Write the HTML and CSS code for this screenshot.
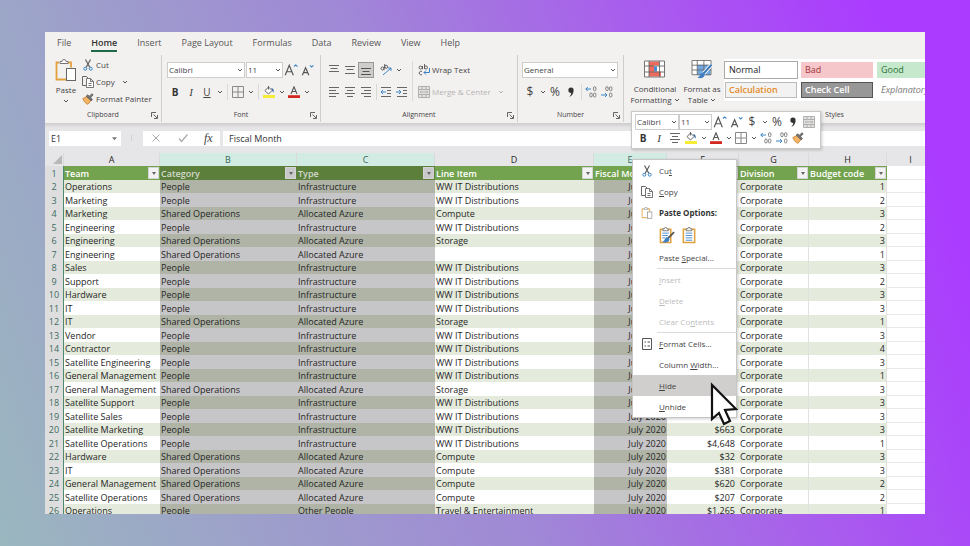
FILE: index.html
```html
<!DOCTYPE html>
<html lang="en">
<head>
<meta charset="utf-8">
<meta name="viewport" content="width=device-width, initial-scale=1">
<title>Budget workbook</title>
<link rel="stylesheet" href="styles.css">
</head>
<body>
<svg class="sprite" aria-hidden="true">
  <symbol id="chev" viewBox="0 0 6 6"><path d="M1 2l2 2 2-2" fill="none" stroke="#555" stroke-width="1"/></symbol>
  <symbol id="cut" viewBox="0 0 10 12"><path d="M2.500 .5l4.400 8M7.500 .5L3.100 8.500" fill="none" stroke="#555" stroke-width="1.100"/><circle cx="2.300" cy="9.700" r="1.500" fill="none" stroke="#3b84c4"/><circle cx="7.700" cy="9.700" r="1.500" fill="none" stroke="#3b84c4"/></symbol>
  <symbol id="copy" viewBox="0 0 12 12"><path d="M4 9.500H.5V.5h4l1.500 1.500" fill="none" stroke="#666"/><path d="M4.500 2.500h4l3 3v6h-7zM8.500 2.500v3h3M6.500 7.500h3M6.500 9.500h3" fill="#fff" stroke="#666" stroke-width=".9"/></symbol>
  <symbol id="painter" viewBox="0 0 12 12"><path d="M.8 5.500L5 3.500l4 4L6 11.300C3.800 10.800 1.800 8.500 .8 5.500z" fill="#f3b466" stroke="#c47f2c" stroke-width=".8"/><path d="M4.200 3l5 5 1.200-1.500L8.700 4.500l2.500-2.700L10 .7 7.300 3.200 5.800 1.800z" fill="#777" stroke="#444" stroke-width=".6"/></symbol>
  <symbol id="paste" viewBox="0 0 22 23"><path d="M4 3.500H1.500v17h10M13 3.500h3v5" fill="none" stroke="#e3a13c" stroke-width="1.800"/><path d="M5 4.500V2.500h2a2 2 0 0 1 4 0h2v2z" fill="#fff" stroke="#777"/><rect x="11.500" y="9.500" width="9" height="12" fill="#fff" stroke="#666"/></symbol>
  <symbol id="borders" viewBox="0 0 12 12"><path d="M.5 .5h11v11H.5zM6 .5v11M.5 6h11" fill="none" stroke="#888"/></symbol>
  <symbol id="fill" viewBox="0 0 12 12"><path d="M5.500 1L2 4.700 5.500 8 9 4.500zM5.500 0v3.500" fill="#fff" stroke="#555" stroke-width=".9"/><path d="M8 2.200c2.500 0 3.200 2 2.500 4.300-.8-.6-1-2-2.500-4.300z" fill="#2d5fa5"/><path d="M0 9h12v3H0z" fill="#f6ec35"/></symbol>
  <symbol id="fcolor" viewBox="0 0 12 12"><path d="M3 8L6 .8 9 8M4 5.500h4" fill="none" stroke="#555" stroke-width="1.100"/><path d="M0 9.200h12V12H0z" fill="#d2281f"/></symbol>
  <symbol id="grow" viewBox="0 0 12 12"><path d="M1 10.500L4.500 2l3.500 8.500M2.300 7.500h4.400" fill="none" stroke="#555"/><path d="M8.500 3L10 1.600 11.500 3" fill="none" stroke="#3b84c4" stroke-width=".9"/></symbol>
  <symbol id="shrink" viewBox="0 0 12 12"><path d="M2 10.500L4.800 4l2.800 6.500M3 8.300h3.600" fill="none" stroke="#555"/><path d="M8.500 2L10 3.400 11.500 2" fill="none" stroke="#3b84c4" stroke-width=".9"/></symbol>
  <symbol id="top" viewBox="0 0 12 12"><path d="M1 1.500h10M2.500 4.500h7M1 7.500h10" stroke="#666"/></symbol>
  <symbol id="mid" viewBox="0 0 12 12"><path d="M1 2.500h10M2.500 5.500h7M1 9.500h10" stroke="#666"/></symbol>
  <symbol id="bot" viewBox="0 0 12 12"><path d="M1 4.500h10M2.500 7.500h7M1 10.500h10" stroke="#555"/></symbol>
  <symbol id="left" viewBox="0 0 12 12"><path d="M1 1.500h10M1 4.500h7M1 7.500h10M1 10.500h7" stroke="#666"/></symbol>
  <symbol id="center" viewBox="0 0 12 12"><path d="M1 1.500h10M3 4.500h6M1 7.500h10M3 10.500h6" stroke="#666"/></symbol>
  <symbol id="right" viewBox="0 0 12 12"><path d="M1 1.500h10M4 4.500h7M1 7.500h10M4 10.500h7" stroke="#666"/></symbol>
  <symbol id="outdent" viewBox="0 0 12 12"><path d="M1 1.500h10M7 4.500h4M7 7.500h4M1 10.500h10" stroke="#666"/><path d="M6 6H1M3 4L1 6l2 2" fill="none" stroke="#3b84c4"/></symbol>
  <symbol id="indent" viewBox="0 0 12 12"><path d="M1 1.500h10M7 4.500h4M7 7.500h4M1 10.500h10" stroke="#666"/><path d="M0 6h5M3 4l2 2-2 2" fill="none" stroke="#3b84c4"/></symbol>
  <symbol id="orient" viewBox="0 0 12 12"><g fill="none" stroke="#555" stroke-width=".9"><circle cx="2.500" cy="4.500" r="1.500"/><path d="M4 3v3.200"/><circle cx="6.200" cy="2.800" r="1.500"/><path d="M4.700 0v4"/></g><path d="M3 11l8-7M8 4h3v3" fill="none" stroke="#3b84c4"/></symbol>
  <symbol id="wrap" viewBox="0 0 12 12"><g fill="none" stroke="#555" stroke-width=".9"><circle cx="2.500" cy="3.500" r="1.500"/><path d="M4.500 2v3.200M6.500 0v5"/><circle cx="8" cy="3.500" r="1.500"/><path d="M4 7.500a1.800 1.800 0 1 0 0 3"/></g><path d="M11.500 4v4.500H6M8 6.500l-2 2 2 2" fill="none" stroke="#3b84c4"/></symbol>
  <symbol id="merge" viewBox="0 0 12 12"><path d="M.5 .5h11v11H.5zM.5 3.500h11M.5 8.500h11M4 .5v3M8 .5v3M4 8.500v3M8 8.500v3M2 6h8M3.500 4.800L2.300 6l1.200 1.200M8.500 4.800L9.700 6 8.500 7.200" fill="#e4e2e1" stroke="#aaa" stroke-width=".9"/></symbol>
  <symbol id="incdec" viewBox="0 0 12 12"><path d="M6 3H.8M2.800 1l-2 2 2 2" fill="none" stroke="#3b84c4"/><g fill="none" stroke="#777" stroke-width=".9"><rect x="8.500" y=".7" width="2.400" height="4" rx="1.200"/><rect x="4.800" y="7" width="2.400" height="4" rx="1.200"/><rect x="8.500" y="7" width="2.400" height="4" rx="1.200"/></g></symbol>
  <symbol id="decdec" viewBox="0 0 12 12"><path d="M0 9h6M4 7l2 2-2 2" fill="none" stroke="#3b84c4"/><g fill="none" stroke="#777" stroke-width=".9"><rect x="4.800" y=".7" width="2.400" height="4" rx="1.200"/><rect x="8.500" y=".7" width="2.400" height="4" rx="1.200"/><rect x="8.500" y="7" width="2.400" height="4" rx="1.200"/></g></symbol>
  <symbol id="comma" viewBox="0 0 12 12"><path d="M6 1.500a2.600 2.600 0 0 1 2.600 2.700C8.600 7.500 7 9.800 4.200 11c1.300-1.300 2-2.600 2-4A2.600 2.600 0 1 1 6 1.500z" fill="#333"/></symbol>
  <symbol id="launch" viewBox="0 0 7 7"><path d="M.5 5V.5H5M2.500 2.500L6 6M6.500 3v3.500H3" fill="none" stroke="#555" stroke-width=".9"/></symbol>
  <symbol id="cond" viewBox="0 0 22 18"><path d="M.5 .5h20v16H.5z" fill="#fff"/><path d="M5 1h10v4H5zM5 5h5v6H5zM5 11h12v5H5z" fill="#ee6a5c"/><path d="M10 6h3v5h-3z" fill="#4a8ad0"/><path d="M.5 .5h20v16H.5zM.5 5.500h20M.5 11.500h20M5 .5v16M15.500 .5v16" fill="none" stroke="#666" stroke-width=".9"/></symbol>
  <symbol id="ftable" viewBox="0 0 22 20"><path d="M.5 .5h20v15H.5z" fill="#fff"/><path d="M6 5h14v11H6z" fill="#6fa8e2"/><path d="M.5 .5h20v15H.5zM.5 5.500h20M.5 10.500h20M6 .5v15M13 .5v15" fill="none" stroke="#666" stroke-width=".9"/><path d="M21 5l-9 10" stroke="#fff" stroke-width="4"/><path d="M21 5l-9 10" stroke="#3b78b8" stroke-width="2"/><path d="M12 13c-3 1-2 4-6 5.500 4 2 8 0 8-4z" fill="#3f7fc2"/></symbol>
  <symbol id="clip" viewBox="0 0 14 18"><path d="M1 2.500h12v14H1z" fill="#fff" stroke="#e3a13c" stroke-width="1.600"/><path d="M4 4V2h1.500a1.500 1.500 0 0 1 3 0H10v2z" fill="#fff" stroke="#777"/><path d="M3.500 6.500h7M3.500 9h7M3.500 11.500h7M3.500 14h7" stroke="#4a8ad0"/></symbol>
  <symbol id="clipbrush" viewBox="0 0 16 18"><path d="M1 2.500h11v14H1z" fill="#fff" stroke="#e3a13c" stroke-width="1.600"/><path d="M3.500 4V2H5a1.500 1.500 0 0 1 3 0h1.500v2z" fill="#fff" stroke="#777"/><path d="M3 6.500h7M3 9h6M3 11.500h3" stroke="#4a8ad0"/><path d="M15.500 5.500L9 12" stroke="#555" stroke-width="2"/><path d="M8 10.500c-3 1-1.500 4-5 5 4 2.500 8 0 7.500-3z" fill="#3f7fc2"/></symbol>
  <symbol id="format" viewBox="0 0 10 12"><path d="M.5 .5h9v11h-9z" fill="#fff" stroke="#555"/><path d="M2.500 4h1.500M2.500 8h1.500M5.500 4h2.500M5.500 8h2.500" stroke="#555" stroke-width="1.200"/></symbol>
</svg>

<main class="window">
  <nav class="tabs">
    <a href="#">File</a><a href="#" class="active">Home</a><a href="#">Insert</a><a href="#">Page Layout</a><a href="#">Formulas</a><a href="#">Data</a><a href="#">Review</a><a href="#">View</a><a href="#">Help</a>
  </nav>

  <section class="ribbon">
    <div class="group clipboard">
      <div class="body">
        <button class="paste"><svg class="i-paste"><use href="#paste"/></svg>Paste<svg class="chev"><use href="#chev"/></svg></button>
        <div class="stack">
          <button><svg class="i12"><use href="#cut"/></svg>Cut</button>
          <button><svg class="i12"><use href="#copy"/></svg>Copy<svg class="chev gap"><use href="#chev"/></svg></button>
          <button><svg class="i12"><use href="#painter"/></svg>Format Painter</button>
        </div>
      </div>
      <div class="caption">Clipboard<button class="launch" aria-label="Clipboard settings"><svg><use href="#launch"/></svg></button></div>
    </div>

    <div class="group font">
      <div class="body rows">
        <div class="row">
          <span class="pick name"><select aria-label="Font"><option>Calibri</option></select><svg class="chev"><use href="#chev"/></svg></span>
          <span class="pick size"><select aria-label="Font size"><option>11</option></select><svg class="chev"><use href="#chev"/></svg></span>
          <button class="tool" aria-label="Increase font size"><svg class="i14"><use href="#grow"/></svg></button>
          <button class="tool" aria-label="Decrease font size"><svg class="i14"><use href="#shrink"/></svg></button>
        </div>
        <div class="row">
          <button class="tool bold">B</button><button class="tool italic">I</button><button class="tool under">U</button><button class="drop" aria-label="Underline styles"><svg class="chev"><use href="#chev"/></svg></button>
          <i class="bar"></i>
          <button class="tool" aria-label="Borders"><svg class="i12"><use href="#borders"/></svg></button><button class="drop" aria-label="Border styles"><svg class="chev"><use href="#chev"/></svg></button>
          <i class="bar"></i>
          <button class="tool" aria-label="Fill colour"><svg class="i12"><use href="#fill"/></svg></button><button class="drop" aria-label="Fill colours"><svg class="chev"><use href="#chev"/></svg></button>
          <button class="tool" aria-label="Font colour"><svg class="i12"><use href="#fcolor"/></svg></button><button class="drop" aria-label="Font colours"><svg class="chev"><use href="#chev"/></svg></button>
        </div>
      </div>
      <div class="caption">Font<button class="launch" aria-label="Font settings"><svg><use href="#launch"/></svg></button></div>
    </div>

    <div class="group align">
      <div class="body">
        <div class="rows">
          <div class="row">
            <button class="tool" aria-label="Top align"><svg class="i12"><use href="#top"/></svg></button><button class="tool" aria-label="Middle align"><svg class="i12"><use href="#mid"/></svg></button><button class="tool on" aria-label="Bottom align"><svg class="i12"><use href="#bot"/></svg></button>
            <button class="tool lead" aria-label="Orientation"><svg class="i12"><use href="#orient"/></svg></button><button class="drop" aria-label="Orientations"><svg class="chev"><use href="#chev"/></svg></button>
          </div>
          <div class="row">
            <button class="tool" aria-label="Align left"><svg class="i12"><use href="#left"/></svg></button><button class="tool" aria-label="Center"><svg class="i12"><use href="#center"/></svg></button><button class="tool" aria-label="Align right"><svg class="i12"><use href="#right"/></svg></button>
            <i class="bar tight"></i>
            <button class="tool" aria-label="Decrease indent"><svg class="i12"><use href="#outdent"/></svg></button><button class="tool" aria-label="Increase indent"><svg class="i12"><use href="#indent"/></svg></button>
          </div>
        </div>
        <i class="bar tall"></i>
        <div class="rows">
          <button class="row wide"><svg class="i12"><use href="#wrap"/></svg>Wrap Text</button>
          <button class="row wide off" disabled><svg class="i12"><use href="#merge"/></svg>Merge &amp; Center<svg class="chev gap"><use href="#chev"/></svg></button>
        </div>
      </div>
      <div class="caption">Alignment<button class="launch" aria-label="Alignment settings"><svg><use href="#launch"/></svg></button></div>
    </div>

    <div class="group number">
      <div class="body rows">
        <div class="row"><span class="pick kind"><select aria-label="Number format"><option>General</option></select><svg class="chev"><use href="#chev"/></svg></span></div>
        <div class="row">
          <button class="tool sign">$</button><button class="drop" aria-label="Currencies"><svg class="chev"><use href="#chev"/></svg></button>
          <button class="tool sign">%</button><button class="tool" aria-label="Comma style"><svg class="i12"><use href="#comma"/></svg></button>
          <i class="bar tight"></i>
          <button class="tool" aria-label="Increase decimal"><svg class="i12"><use href="#incdec"/></svg></button><button class="tool" aria-label="Decrease decimal"><svg class="i12"><use href="#decdec"/></svg></button>
        </div>
      </div>
      <div class="caption">Number<button class="launch" aria-label="Number settings"><svg><use href="#launch"/></svg></button></div>
    </div>

    <div class="group styles">
      <div class="body">
        <button class="big"><svg class="i-big"><use href="#cond"/></svg><span>Conditional<br>Formatting <svg class="chev"><use href="#chev"/></svg></span></button>
        <button class="big narrow"><svg class="i-big"><use href="#ftable"/></svg><span>Format as<br>Table <svg class="chev"><use href="#chev"/></svg></span></button>
        <div class="gallery">
          <button class="normal">Normal</button><button class="bad">Bad</button><button class="good">Good</button>
          <button class="calc">Calculation</button><button class="check">Check Cell</button><button class="expl">Explanatory</button>
        </div>
      </div>
      <div class="caption">Styles</div>
    </div>
  </section>

  <section class="formula">
    <span class="namebox"><input aria-label="Name box" value="E1"><svg viewBox="0 0 6 6"><path d="M0 1.500h6L3 5z" fill="#777"/></svg></span>
    <svg class="dots" viewBox="0 0 2 10"><path d="M0 0h2v2H0zM0 4h2v2H0zM0 8h2v2H0z" fill="#bbb"/></svg>
    <span class="actions">
      <button aria-label="Cancel"><svg class="i12" viewBox="0 0 12 12"><path d="M2.500 2.500l7 7M9.500 2.500l-7 7" stroke="#aaa"/></svg></button>
      <button aria-label="Enter"><svg class="i12" viewBox="0 0 12 12"><path d="M2 6.500L4.500 9.500 10.500 2.500" fill="none" stroke="#aaa" stroke-width="1.200"/></svg></button>
      <button class="fx">fx</button>
    </span>
    <input class="entry" aria-label="Formula bar" value="Fiscal Month">
  </section>

  <table class="sheet">
    <colgroup><col class="cn"><col class="ca"><col class="cb"><col class="cc"><col class="cd"><col class="ce"><col class="cf"><col class="cg"><col class="ch"><col></colgroup>
    <thead><tr><th><svg class="corner" viewBox="0 0 9 9"><path d="M9 0v9H0z" fill="#b9b9b9"/></svg></th><th>A</th><th>B</th><th>C</th><th>D</th><th>E</th><th>F</th><th>G</th><th>H</th><th>I</th></tr></thead>
    <tbody>
      <tr class="titles"><th>1</th><td><div>Team<button aria-label="Filter team"></button></div></td><td><div>Category<button aria-label="Filter category"></button></div></td><td><div>Type<button aria-label="Filter type"></button></div></td><td><div>Line Item<button aria-label="Filter line item"></button></div></td><td><div>Fiscal Month</div></td><td><div><button aria-label="Filter amount"></button></div></td><td><div>Division<button aria-label="Filter division"></button></div></td><td><div>Budget code<button aria-label="Filter budget code"></button></div></td><td></td></tr>
      <tr><th>2</th><td>Operations</td><td>People</td><td>Infrastructure</td><td>WW IT Distributions</td><td>July 2020</td><td></td><td>Corporate</td><td>1</td><td></td></tr>
      <tr><th>3</th><td>Marketing</td><td>People</td><td>Infrastructure</td><td>WW IT Distributions</td><td>July 2020</td><td></td><td>Corporate</td><td>2</td><td></td></tr>
      <tr><th>4</th><td>Marketing</td><td>Shared Operations</td><td>Allocated Azure</td><td>Compute</td><td>July 2020</td><td></td><td>Corporate</td><td>3</td><td></td></tr>
      <tr><th>5</th><td>Engineering</td><td>People</td><td>Infrastructure</td><td>WW IT Distributions</td><td>July 2020</td><td></td><td>Corporate</td><td>2</td><td></td></tr>
      <tr><th>6</th><td>Engineering</td><td>Shared Operations</td><td>Allocated Azure</td><td>Storage</td><td>July 2020</td><td></td><td>Corporate</td><td>3</td><td></td></tr>
      <tr><th>7</th><td>Engineering</td><td>Shared Operations</td><td>Allocated Azure</td><td></td><td>July 2020</td><td></td><td>Corporate</td><td>1</td><td></td></tr>
      <tr><th>8</th><td>Sales</td><td>People</td><td>Infrastructure</td><td>WW IT Distributions</td><td>July 2020</td><td></td><td>Corporate</td><td>3</td><td></td></tr>
      <tr><th>9</th><td>Support</td><td>People</td><td>Infrastructure</td><td>WW IT Distributions</td><td>July 2020</td><td></td><td>Corporate</td><td>2</td><td></td></tr>
      <tr><th>10</th><td>Hardware</td><td>People</td><td>Infrastructure</td><td>WW IT Distributions</td><td>July 2020</td><td></td><td>Corporate</td><td>3</td><td></td></tr>
      <tr><th>11</th><td>IT</td><td>People</td><td>Infrastructure</td><td>WW IT Distributions</td><td>July 2020</td><td></td><td>Corporate</td><td>3</td><td></td></tr>
      <tr><th>12</th><td>IT</td><td>Shared Operations</td><td>Allocated Azure</td><td>Storage</td><td>July 2020</td><td></td><td>Corporate</td><td>1</td><td></td></tr>
      <tr><th>13</th><td>Vendor</td><td>People</td><td>Infrastructure</td><td>WW IT Distributions</td><td>July 2020</td><td></td><td>Corporate</td><td>3</td><td></td></tr>
      <tr><th>14</th><td>Contractor</td><td>People</td><td>Infrastructure</td><td>WW IT Distributions</td><td>July 2020</td><td></td><td>Corporate</td><td>4</td><td></td></tr>
      <tr><th>15</th><td>Satellite Engineering</td><td>People</td><td>Infrastructure</td><td>WW IT Distributions</td><td>July 2020</td><td></td><td>Corporate</td><td>3</td><td></td></tr>
      <tr><th>16</th><td>General Management</td><td>People</td><td>Infrastructure</td><td>WW IT Distributions</td><td>July 2020</td><td></td><td>Corporate</td><td>1</td><td></td></tr>
      <tr><th>17</th><td>General Management</td><td>Shared Operations</td><td>Allocated Azure</td><td>Storage</td><td>July 2020</td><td></td><td>Corporate</td><td>3</td><td></td></tr>
      <tr><th>18</th><td>Satellite Support</td><td>People</td><td>Infrastructure</td><td>WW IT Distributions</td><td>July 2020</td><td></td><td>Corporate</td><td>3</td><td></td></tr>
      <tr><th>19</th><td>Satellite Sales</td><td>People</td><td>Infrastructure</td><td>WW IT Distributions</td><td>July 2020</td><td></td><td>Corporate</td><td>3</td><td></td></tr>
      <tr><th>20</th><td>Satellite Marketing</td><td>People</td><td>Infrastructure</td><td>WW IT Distributions</td><td>July 2020</td><td>$663</td><td>Corporate</td><td>3</td><td></td></tr>
      <tr><th>21</th><td>Satellite Operations</td><td>People</td><td>Infrastructure</td><td>WW IT Distributions</td><td>July 2020</td><td>$4,648</td><td>Corporate</td><td>1</td><td></td></tr>
      <tr><th>22</th><td>Hardware</td><td>Shared Operations</td><td>Allocated Azure</td><td>Compute</td><td>July 2020</td><td>$32</td><td>Corporate</td><td>3</td><td></td></tr>
      <tr><th>23</th><td>IT</td><td>Shared Operations</td><td>Allocated Azure</td><td>Compute</td><td>July 2020</td><td>$381</td><td>Corporate</td><td>3</td><td></td></tr>
      <tr><th>24</th><td>General Management</td><td>Shared Operations</td><td>Allocated Azure</td><td>Compute</td><td>July 2020</td><td>$620</td><td>Corporate</td><td>2</td><td></td></tr>
      <tr><th>25</th><td>Satellite Operations</td><td>Shared Operations</td><td>Allocated Azure</td><td>Compute</td><td>July 2020</td><td>$207</td><td>Corporate</td><td>2</td><td></td></tr>
      <tr><th>26</th><td>Operations</td><td>People</td><td>Other People</td><td>Travel &amp; Entertainment</td><td>July 2020</td><td>$1,265</td><td>Corporate</td><td>1</td><td></td></tr>
    </tbody>
  </table>

  <div class="mini">
    <div class="row">
      <span class="pick name"><select aria-label="Cell font"><option>Calibri</option></select><svg class="chev"><use href="#chev"/></svg></span>
      <span class="pick size"><select aria-label="Cell font size"><option>11</option></select><svg class="chev"><use href="#chev"/></svg></span>
      <button class="tool" aria-label="Increase size"><svg class="i14"><use href="#grow"/></svg></button><button class="tool" aria-label="Decrease size"><svg class="i14"><use href="#shrink"/></svg></button><button class="tool sign">$</button><button class="drop" aria-label="Currency list"><svg class="chev"><use href="#chev"/></svg></button><button class="tool sign">%</button><button class="tool" aria-label="Comma"><svg class="i12"><use href="#comma"/></svg></button><button class="tool" aria-label="Merge cells"><svg class="i12"><use href="#merge"/></svg></button>
    </div>
    <div class="row">
      <button class="tool bold">B</button><button class="tool italic">I</button><button class="tool" aria-label="Centre text"><svg class="i12"><use href="#center"/></svg></button><button class="tool" aria-label="Fill"><svg class="i12"><use href="#fill"/></svg></button><button class="drop" aria-label="Fill list"><svg class="chev"><use href="#chev"/></svg></button><button class="tool" aria-label="Text colour"><svg class="i12"><use href="#fcolor"/></svg></button><button class="drop" aria-label="Text colour list"><svg class="chev"><use href="#chev"/></svg></button><button class="tool" aria-label="Cell borders"><svg class="i12"><use href="#borders"/></svg></button><button class="drop" aria-label="Cell border list"><svg class="chev"><use href="#chev"/></svg></button><button class="tool" aria-label="More decimals"><svg class="i12"><use href="#incdec"/></svg></button><button class="tool" aria-label="Fewer decimals"><svg class="i12"><use href="#decdec"/></svg></button><button class="tool" aria-label="Format painter"><svg class="i12"><use href="#painter"/></svg></button>
    </div>
  </div>

  <div class="menu">
    <button><svg class="i12"><use href="#cut"/></svg><span>Cu<u>t</u></span></button>
    <button><svg class="i12"><use href="#copy"/></svg><span><u>C</u>opy</span></button>
    <div class="heading"><svg class="i12" viewBox="0 0 22 23"><use href="#paste"/></svg><strong>Paste Options:</strong></div>
    <div class="pastes"><button aria-label="Paste formatting"><svg class="i-clip"><use href="#clipbrush"/></svg></button><button aria-label="Paste values"><svg class="i-clip"><use href="#clip"/></svg></button></div>
    <button><i></i><span>Paste <u>S</u>pecial...</span></button>
    <hr>
    <button disabled><i></i><span><u>I</u>nsert</span></button>
    <button disabled><i></i><span><u>D</u>elete</span></button>
    <button disabled><i></i><span>Clear Co<u>n</u>tents</span></button>
    <hr>
    <button><svg class="i12"><use href="#format"/></svg><span><u>F</u>ormat Cells...</span></button>
    <button><i></i><span>Column <u>W</u>idth...</span></button>
    <button class="hover"><i></i><span><u>H</u>ide</span></button>
    <button><i></i><span><u>U</u>nhide</span></button>
  </div>

  <svg class="cursor" viewBox="0 0 30 46"><path d="M3 3v34l7-6 5 11 6-3-5-11 11-1z" fill="#fff" stroke="#111" stroke-width="2.200"/></svg>
</main>
</body>
</html>
```
FILE: styles.css
```css
* { box-sizing: border-box; }
body {
  margin: 0;
  height: 100vh;
  padding: 32px 45px;
  background: linear-gradient(70deg, #9ab7bf 0%, #a088d6 46%, #a95bee 72%, #aa3bff 92%);
  font-family: "Open Sans", "Noto Sans", sans-serif;
  font-size: 9px;
  line-height: 12px;
  color: #444;
}
button, input, select {
  font: inherit;
  color: inherit;
  background: none;
  border: 0;
  margin: 0;
  padding: 0;
  border-radius: 0;
}
button { display: flex; align-items: center; justify-content: center; }
select, input { appearance: none; min-width: 0; outline: 0; }
.sprite { position: absolute; width: 0; height: 0; }
svg { flex: none; display: block; }
.chev { width: 6px; height: 6px; }
.i12 { width: 12px; height: 12px; }
.i14 { width: 14px; height: 14px; }

.window {
  position: relative;
  height: 100%;
  overflow: hidden;
  background: #fff;
}
.tabs {
  display: flex;
  gap: 20px;
  height: 23px;
  padding-left: 12px;
  background: #f3f1f0;
}
.tabs a { color: #555; text-decoration: none; line-height: 22px; height: 20px; }
.tabs .active { color: #333; font-weight: 600; border-bottom: 2px solid #22694a; }

.ribbon, .mini, .menu { font-size: 8px; }
.ribbon { display: flex; overflow: hidden; background: #f3f1f0; padding-bottom: 1px; }
.group {
  flex: none;
  display: flex;
  flex-direction: column;
  border-right: 1px solid #d0cecd;
  color: #444;
}
.body { display: flex; height: 54px; }
.caption {
  display: flex;
  justify-content: center;
  position: relative;
  height: 13px;
  font-size: 7px;
}
.launch { position: absolute; right: 3px; top: 3px; }
.launch svg { width: 7px; height: 7px; }
.rows { display: flex; flex-direction: column; gap: 6px; padding-top: 7px; }
.row { display: flex; align-items: center; height: 16px; }
.tool { width: 16px; height: 16px; }
.drop { width: 9px; height: 16px; }
.bold { font-weight: 700; font-size: 10px; color: #333; }
.italic { font: italic 11px "Liberation Serif", serif; }
.under { text-decoration: underline; font-size: 10px; }
.sign { font-size: 12px; }
.on { background: #cfcdcc; border: 1px solid #999; }
.bar { width: 1px; height: 16px; margin: 0 2px 0 3px; background: #dbd9d8; }
.bar.tight { margin: 0 1px 0 2px; }
.bar.tall { height: 40px; margin: 6px 5px 0 2px; }
.pick { display: grid; align-items: center; background: #fff; border: 1px solid #cfcdcc; height: 16px; }
.pick select, .pick svg { grid-area: 1 / 1; }
.pick select { width: 100%; height: 14px; padding-left: 1px; line-height: 14px; }
.pick svg { justify-self: end; margin-right: 1px; pointer-events: none; }
.name { width: 78px; }
.size { width: 37px; margin-left: 1px; }
.kind { width: 96px; }

.clipboard { width: 117px; }
.clipboard .body { padding: 1px 0 0 9px; }
.paste { flex-direction: column; justify-content: flex-start; gap: 2px; width: 24px; padding-top: 3px; }
.i-paste { width: 22px; height: 23px; }
.stack { display: flex; flex-direction: column; padding-left: 4px; }
.stack button { justify-content: flex-start; gap: 2px; height: 17px; }
.chev.gap { margin-left: 5px; }
.font { width: 159px; }
.font .body { padding-left: 5px; }
.lead { margin-left: 4px; }
.align { width: 197px; }
.align .body { padding-left: 5px; }
.wide { justify-content: flex-start; gap: 2px; }
.off { color: #b5b3b2; }
.off .chev { opacity: .4; }
.number { width: 106px; }
.number .body { padding-left: 4px; }
.styles { width: 422px; }
.styles .body { padding: 4px 0 0 6px; }
.big { flex-direction: column; justify-content: flex-start; gap: 4px; width: 50px; padding-top: 1px; line-height: 11px; white-space: nowrap; }
.big.narrow { width: 44px; }
.big .chev { display: inline-block; }
.i-big { width: 22px; height: 19px; }
.gallery {
  display: grid;
  grid-template-columns: repeat(3, 72px);
  grid-auto-rows: 16px;
  gap: 4px;
  flex: 1;
  padding: 3px 1px;
  background: #fff;
  height: 42px;
  font-size: 9px;
}
.gallery button { justify-content: flex-start; padding-left: 3px; border: 1px solid transparent; }
.gallery .normal { color: #222; outline: 1px solid #aaa; }
.gallery .bad { background: #f5c7ca; color: #a33138; }
.gallery .good { background: #c6e8cc; color: #2a7136; }
.gallery .calc { background: #f2f2f2; border-color: #bbb; color: #e58a26; font-weight: 600; }
.gallery .check { background: #979797; border-color: #555; color: #fff; font-weight: 600; }
.gallery .expl { color: #777; font-style: italic; }

.formula {
  display: flex;
  align-items: center;
  height: 30px;
  padding-left: 4px;
  background: linear-gradient(#cfcdcd, #e6e6e8 5px);
  color: #333;
}
.formula input { background: #fff; height: 15px; }
.namebox { display: flex; align-items: center; width: 72px; background: #fff; padding: 0 4px 0 2px; }
.namebox input { flex: 1; }
.namebox svg { width: 5px; height: 5px; }
.dots { width: 1px; height: 8px; margin: 0 11px 0 10px; }
.actions { display: flex; justify-content: space-around; width: 77px; height: 15px; background: #fff; margin-right: 3px; }
.fx { font: italic 12px "Liberation Serif", serif; color: #444; }
.entry { flex: 1; padding-left: 6px; }

.sheet {
  width: calc(100% + 10px);
  table-layout: fixed;
  border-collapse: separate;
  border-spacing: 0;
  font-size: 9px;
  line-height: 13px;
  color: #262626;
  white-space: nowrap;
}
.cn { width: 19px; } .ca { width: 96px; } .cb { width: 137px; } .cc { width: 138px; } .cd { width: 159px; }
.ce { width: 73px; } .cf { width: 72px; } .cg { width: 70px; } .ch { width: 78px; }
.sheet th, .sheet td { padding: 0 1px; height: 13px; overflow: hidden; }
.sheet th { font-weight: 400; }
.sheet thead th { background: #e6e6e8; border-right: 1px solid #dadadc; }
.sheet thead th:nth-child(3), .sheet thead th:nth-child(4), .sheet thead th:nth-child(6) { background: #d3ece3; color: #37675a; }
.corner { width: 9px; height: 9px; margin-left: 7px; }
.sheet tbody th { background: #dedede; color: #3c6b62; border-right: 1px solid #4f8a70; }
.sheet td { text-align: left; }
.sheet tbody tr:nth-child(odd) td { height: 14px; }
.sheet tr:nth-child(even) td { background: #e4ebdc; }
.sheet td:nth-child(3), .sheet td:nth-child(4), .sheet td:nth-child(6) { background: #c6c5c7; }
.sheet tr:nth-child(even) td:nth-child(3), .sheet tr:nth-child(even) td:nth-child(4), .sheet tr:nth-child(even) td:nth-child(6) { background: #afb4a6; }
.sheet td:nth-child(6), .sheet td:nth-child(7), .sheet td:nth-child(9) { text-align: right; }
.sheet td:nth-child(7) { padding-right: 4px; }
.sheet td:nth-child(8), .sheet td:nth-child(9) { border-right: 1px solid #e0e2de; }
.sheet tr td:nth-child(10) { background: #fff; border-bottom: 1px solid #e9e9e9; }
.sheet .titles td { background: #74a34f; color: #fff; font-weight: 600; border-right: 0; }
.sheet .titles td:nth-child(3), .sheet .titles td:nth-child(4) { background: #5c7f3c; color: #d3d8cd; }
.sheet .titles td:nth-child(7) { padding-right: 1px; }
.sheet .titles td:nth-child(10) { background: #fff; }
.titles div { display: flex; height: 13px; align-items: center; justify-content: space-between; }
.titles button { width: 11px; height: 12px; margin-left: auto; background: #f2f2f2; border: 1px solid #d4d4d4; }
.titles button::after { content: ""; border: 2px solid transparent; border-top: 3px solid #666; border-bottom: 0; }
.titles td:nth-child(3) button, .titles td:nth-child(4) button { background: #c9c8ca; }

.mini {
  position: absolute;
  left: 586px;
  top: 79px;
  padding: 2px 3px;
  background: #fff;
  border: 1px solid #c8c8c8;
  box-shadow: 1px 1px 3px rgba(0, 0, 0, .2);
}
.mini .name { width: 44px; }
.mini .size { width: 33px; margin: 0; }

.menu {
  position: absolute;
  left: 587px;
  top: 127px;
  width: 105px;
  background: #fff;
  border: 1px solid #c6c6c6;
  box-shadow: 1px 1px 3px rgba(0, 0, 0, .2);
}
.menu > button, .heading {
  display: grid;
  grid-template-columns: 12px 1fr;
  gap: 6px;
  align-items: center;
  width: 100%;
  height: 21px;
  padding-left: 8px;
  text-align: left;
}
.menu hr { height: 1px; border: 0; margin: 0 0 0 24px; background: #dcdcdc; }
.menu > button:disabled { color: #bcbcbc; }
.heading { color: #333; }
.pastes { display: flex; gap: 6px; height: 24px; align-items: center; padding-left: 26px; }
.i-clip { width: 16px; height: 17px; }
.menu > .hover { background: #d1cfce; }
.cursor { position: absolute; left: 664px; top: 350px; width: 30px; height: 46px; }
```
